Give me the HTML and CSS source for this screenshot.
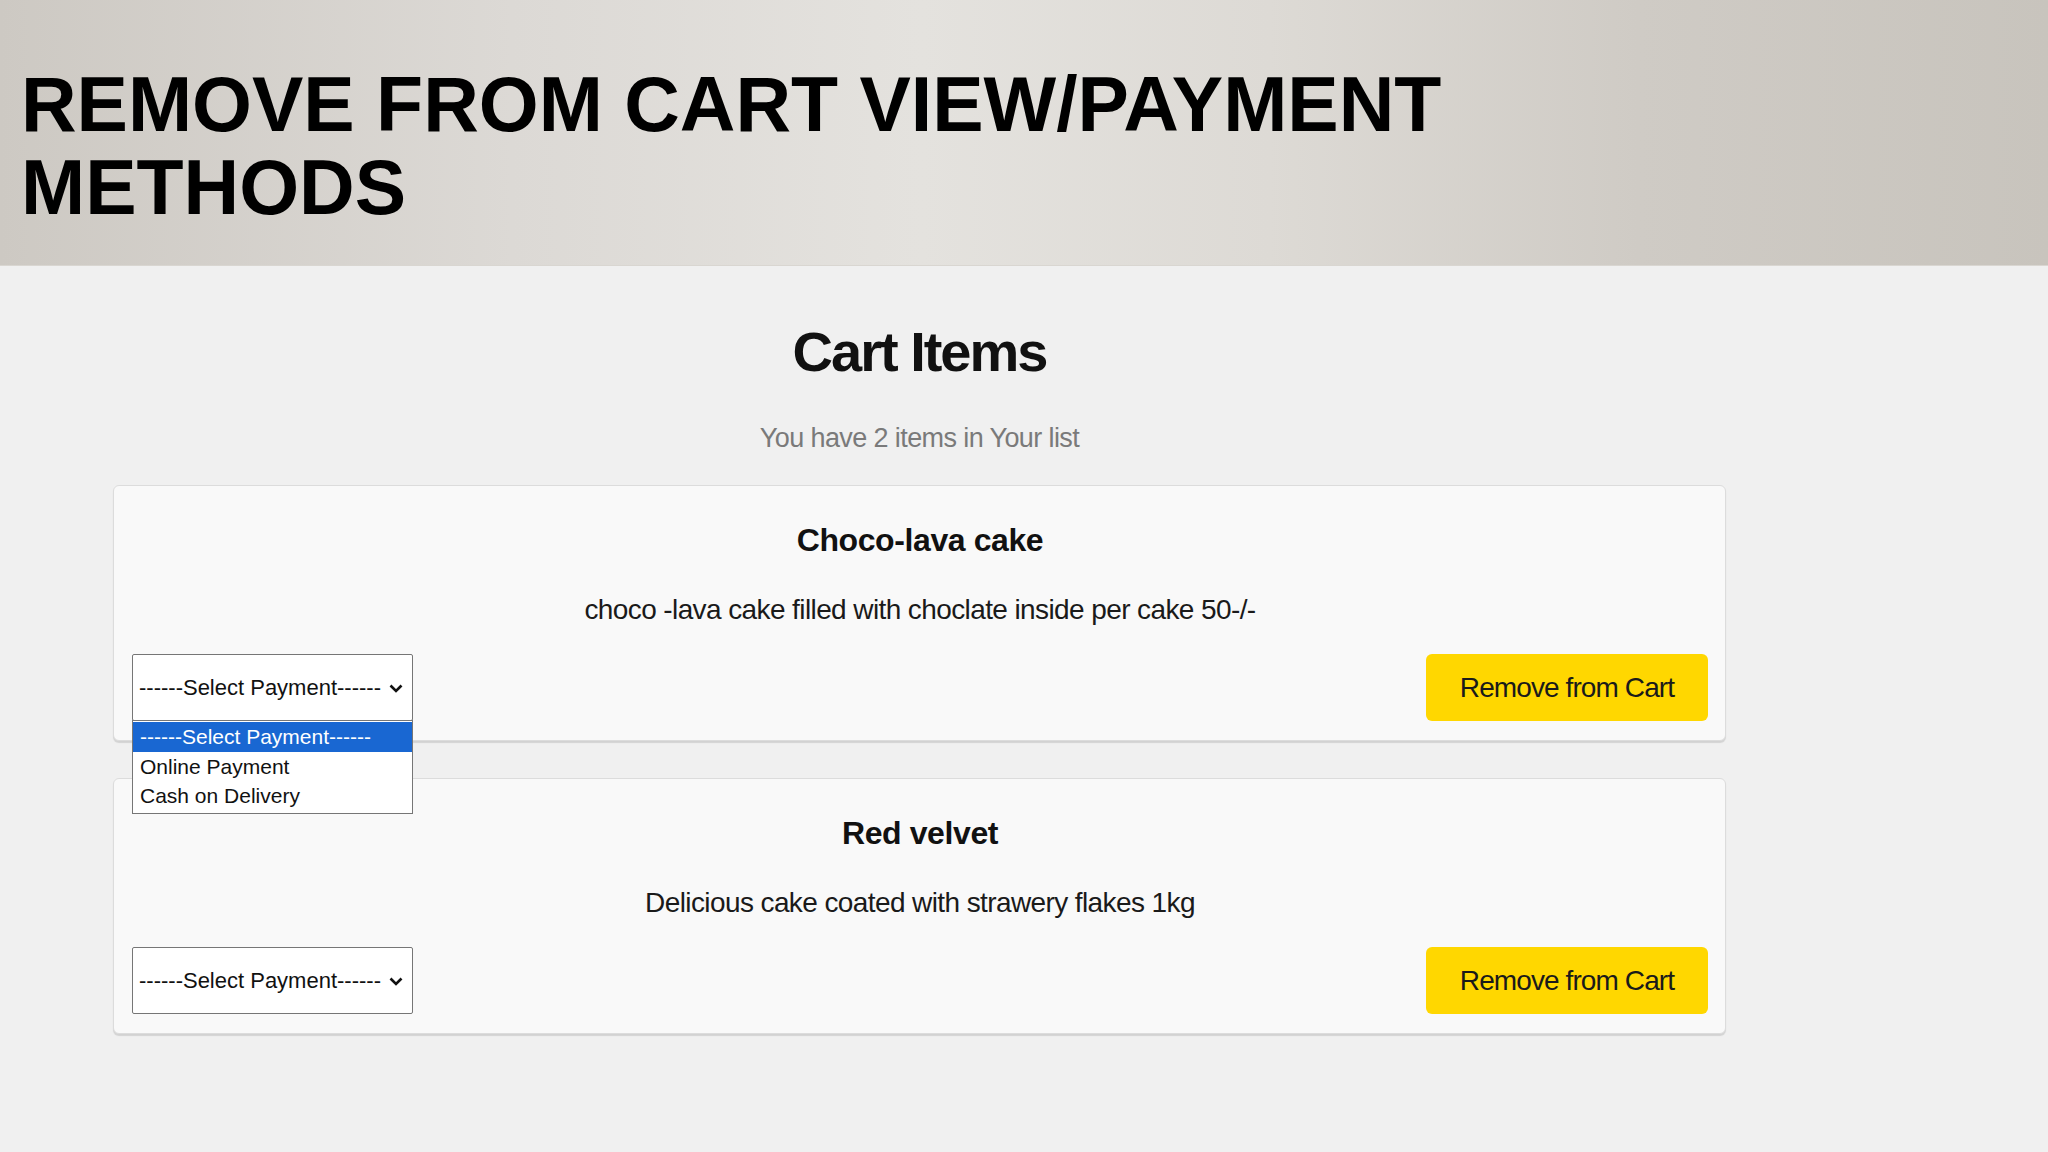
FILE: index.html
```html
<!DOCTYPE html>
<html lang="en">
<head>
    <meta charset="UTF-8">
    <meta name="viewport" content="width=device-width, initial-scale=1.0">
    <title>Remove From Cart View / Payment Methods</title>
    <link rel="stylesheet" href="styles.css">
</head>
<body>
    <header class="slide-header">
        <h1>REMOVE FROM CART VIEW/PAYMENT METHODS</h1>
    </header>
    <main class="cart">
        <h2 class="cart-title">Cart Items</h2>
        <p class="cart-count">You have 2 items in Your list</p>

        <div class="cart-item">
            <h3>Choco-lava cake</h3>
            <p>choco -lava cake filled with choclate inside per cake 50-/-</p>
            <div class="item-actions">
                <div class="select-wrap">
                    <select class="payment-select">
                        <option>------Select Payment------</option>
                        <option>Online Payment</option>
                        <option>Cash on Delivery</option>
                    </select>
                    <svg class="select-arrow" width="14" height="9" viewBox="0 0 14 9"><path d="M1.5 1.5 L7 7 L12.5 1.5" fill="none" stroke="#111" stroke-width="2.6"/></svg>
                    <ul class="select-menu">
                        <li class="active">------Select Payment------</li>
                        <li>Online Payment</li>
                        <li>Cash on Delivery</li>
                    </ul>
                </div>
                <button class="remove-button">Remove from Cart</button>
            </div>
        </div>

        <div class="cart-item">
            <h3>Red velvet</h3>
            <p>Delicious cake coated with strawery flakes 1kg</p>
            <div class="item-actions">
                <div class="select-wrap">
                    <select class="payment-select">
                        <option>------Select Payment------</option>
                        <option>Online Payment</option>
                        <option>Cash on Delivery</option>
                    </select>
                    <svg class="select-arrow" width="14" height="9" viewBox="0 0 14 9"><path d="M1.5 1.5 L7 7 L12.5 1.5" fill="none" stroke="#111" stroke-width="2.6"/></svg>
                </div>
                <button class="remove-button">Remove from Cart</button>
            </div>
        </div>
    </main>
</body>
</html>
```

FILE: styles.css
```css
body {
    font-family: "Liberation Sans", Arial, sans-serif;
    margin: 0;
    padding: 0;
    background-color: #f0f0f0;
    color: #111;
}
.slide-header {
    height: 266px;
    box-sizing: border-box;
    padding: 63px 0 0 21px;
    background: linear-gradient(90deg, #cdc9c3 0%, #dcd9d5 25%, #e4e2de 45%, #dddad5 62%, #cfcbc5 80%, #c8c4bd 100%);
    border-bottom: 1px solid #d9d6d1;
}
.slide-header h1 {
    margin: 0;
    max-width: 1480px;
    font-size: 77px;
    line-height: 83px;
    font-weight: bold;
    color: #000;
}
.cart {
    width: 1613px;
    margin-left: 113px;
    text-align: center;
}
.cart-title {
    margin: 54px 0 0;
    font-size: 56px;
    line-height: 64px;
    letter-spacing: -2px;
    font-weight: bold;
}
.cart-count {
    margin: 38px 0 31px;
    font-size: 27px;
    line-height: 32px;
    letter-spacing: -0.6px;
    color: #7a7a7a;
}
.cart-item {
    background-color: #f9f9f9;
    border: 1px solid #dcdcdc;
    border-radius: 6px;
    box-shadow: 0 2px 1px rgba(0, 0, 0, 0.12);
    padding: 18px 17px 19px 18px;
    margin-bottom: 37px;
}
.cart-item h3 {
    margin: 18px 0 0;
    font-size: 32px;
    line-height: 36px;
    letter-spacing: -0.4px;
    font-weight: bold;
}
.cart-item p {
    margin: 36px 0 0;
    font-size: 28px;
    line-height: 32px;
    letter-spacing: -0.6px;
    color: #1a1a1a;
}
.item-actions {
    display: flex;
    justify-content: space-between;
    align-items: center;
    margin-top: 28px;
}
.select-wrap {
    position: relative;
    width: 281px;
    height: 67px;
}
.payment-select {
    appearance: none;
    -webkit-appearance: none;
    width: 100%;
    height: 100%;
    box-sizing: border-box;
    padding: 0 0 0 6px;
    border: 1px solid #767676;
    border-radius: 2px;
    background-color: #fff;
    font-family: "Liberation Sans", Arial, sans-serif;
    font-size: 22px;
    color: #111;
}
.select-arrow {
    position: absolute;
    right: 10px;
    top: 30px;
    pointer-events: none;
}
.select-menu {
    position: absolute;
    top: 66px;
    left: 0;
    z-index: 5;
    width: 100%;
    box-sizing: border-box;
    margin: 0;
    padding: 1px 0 3px;
    list-style: none;
    background-color: #fff;
    border: 1px solid #767676;
    text-align: left;
}
.select-menu li {
    height: 29px;
    padding-left: 7px;
    font-size: 21px;
    line-height: 29px;
    color: #111;
}
.select-menu li.active {
    height: 30px;
    background-color: #1967d2;
    color: #fff;
}
.remove-button {
    width: 282px;
    height: 67px;
    border: none;
    border-radius: 6px;
    background-color: #ffd700;
    color: #1a1a1a;
    font-family: "Liberation Sans", Arial, sans-serif;
    font-size: 28px;
    letter-spacing: -0.9px;
    cursor: pointer;
}
.remove-button:hover {
    background-color: #f5cf00;
}
```
